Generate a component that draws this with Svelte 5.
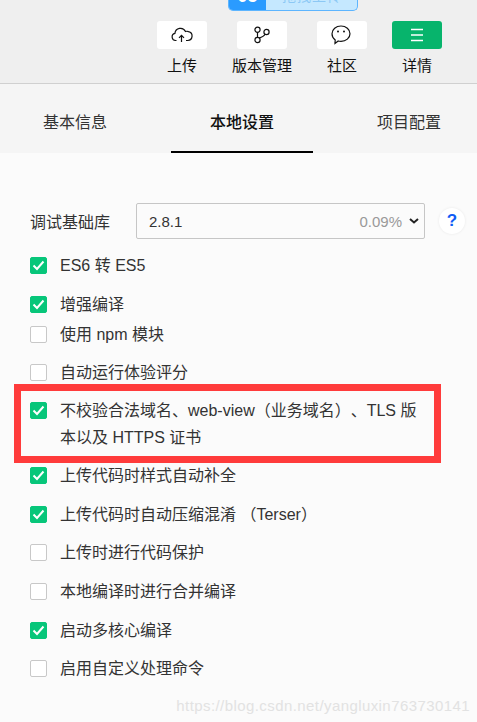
<script lang="ts">
    interface Option {
        label: string;
        checked: boolean;
        tight?: boolean;
        marked?: boolean;
    }

    const tabs: string[] = ["基本信息", "本地设置", "项目配置"];
    const active_tab: number = 1;

    const options: Option[] = [
        { label: "ES6 转 ES5", checked: true },
        { label: "增强编译", checked: true },
        { label: "使用 npm 模块", checked: false, tight: true },
        { label: "自动运行体验评分", checked: false },
        {
            label: "不校验合法域名、web-view（业务域名）、TLS 版本以及 HTTPS 证书",
            checked: true,
            marked: true,
        },
        { label: "上传代码时样式自动补全", checked: true },
        { label: "上传代码时自动压缩混淆 （Terser）", checked: true },
        { label: "上传时进行代码保护", checked: false },
        { label: "本地编译时进行合并编译", checked: false },
        { label: "启动多核心编译", checked: true },
        { label: "启用自定义处理命令", checked: false },
    ];
</script>

<main>
    <header class="toolbar">
        <div class="banner">
            <span class="banner-left">05</span>
            <span class="banner-right">拖拽上传</span>
        </div>
        <div class="tools">
            <div class="tool">
                <div class="tool-btn">
                    <svg width="26" height="18" viewBox="0 0 26 18" fill="none" stroke="#111" stroke-width="1.2">
                        <path d="M7.500 14.500H6.500a3.600 3.600 0 0 1-.6-7.100 5.600 5.600 0 0 1 10.600-1.900 4.200 4.200 0 0 1 3 .1 4.500 4.500 0 0 1-.8 8.900H17" />
                        <path d="M12.500 16V9.500M10 11.800l2.500-2.500 2.500 2.500" />
                    </svg>
                </div>
                <span>上传</span>
            </div>
            <div class="tool">
                <div class="tool-btn">
                    <svg width="20" height="18" viewBox="0 0 20 18" fill="none" stroke="#111" stroke-width="1.2">
                        <circle cx="5.500" cy="3.800" r="2.600" />
                        <circle cx="5.500" cy="14" r="2.600" />
                        <circle cx="14.500" cy="6" r="2.600" />
                        <path d="M5.500 6.400v5M13 8.200c-1 2-3.500 3-6 3.800" />
                    </svg>
                </div>
                <span>版本管理</span>
            </div>
            <div class="tool">
                <div class="tool-btn">
                    <svg class="chat-icon" width="22" height="22" viewBox="0 0 22 22" fill="none" stroke="#111" stroke-width="1.2">
                        <path d="M11 2c5 0 9 3.400 9 7.700s-4 7.700-9 7.700c-1 0-1.900-.1-2.800-.4L5 19.500l.2-3.600C3.200 14.500 2 12.300 2 9.700 2 5.400 6 2 11 2z" />
                        <circle cx="8" cy="7.500" r="1" fill="#111" stroke="none" />
                        <circle cx="14" cy="7.500" r="1" fill="#111" stroke="none" />
                    </svg>
                </div>
                <span>社区</span>
            </div>
            <div class="tool details">
                <div class="tool-btn green">
                    <svg width="14" height="14" viewBox="0 0 14 14" fill="none" stroke="#fff" stroke-width="1.300">
                        <path d="M1 1.500h12M1 7h12M1 12.500h12" />
                    </svg>
                </div>
                <span>详情</span>
            </div>
        </div>
    </header>

    <nav class="tabs">
        {#each tabs as tab, i}
            <div class="tab" class:active={i == active_tab}>{tab}</div>
        {/each}
    </nav>

    <section class="settings">
        <div class="lib-row">
            <span class="lib-label">调试基础库</span>
            <div class="select">
                <span class="version">2.8.1</span>
                <span class="percent">0.09%</span>
                <svg width="10" height="6" viewBox="0 0 10 6" fill="none" stroke="#222" stroke-width="2">
                    <path d="M1 1l4 3.500L9 1" />
                </svg>
            </div>
            <div class="help">?</div>
        </div>

        {#each options as option}
            <div class="option" class:tight={option.tight} class:marked={option.marked}>
                <span class="box" class:checked={option.checked}>
                    {#if option.checked}
                        <svg width="13" height="11" viewBox="0 0 13 11" fill="none" stroke="#fff" stroke-width="2">
                            <path d="M1.500 5.500l3.500 3.500 6.500-7.500" />
                        </svg>
                    {/if}
                </span>
                <span class="text">{option.label}</span>
            </div>
        {/each}
    </section>

    <div class="watermark">https://blog.csdn.net/yangluxin763730141</div>
</main>

<style>
    :global(body) {
        margin: 0;
    }
    * {
        box-sizing: border-box;
    }
    main {
        position: relative;
        width: 477px;
        height: 722px;
        overflow: hidden;
        background-color: #fbfbfb;
        color: #333333;
        font-family: "Liberation Sans", "Noto Sans CJK SC", sans-serif;
        text-spacing-trim: space-all;
    }
    .toolbar {
        height: 84px;
        background-color: #efefef;
        border-bottom: 1px solid #d0d0d0;
        padding-left: 157px;
    }
    .banner {
        display: flex;
        width: 130px;
        height: 11px;
        margin-left: 71px;
        overflow: hidden;
        border: 1px solid #5db5ff;
        border-top: none;
        border-radius: 0 0 5px 5px;
        background-color: #c5e8ff;
    }
    .banner-left {
        width: 37px;
        height: 14px;
        margin-top: -4px;
        background-color: #2a9bff;
        color: #ffffff;
        font-size: 18px;
        font-weight: bold;
        line-height: 0;
        text-align: center;
    }
    .banner-right {
        height: 14px;
        margin-top: -4px;
        padding-left: 16px;
        color: #8cc8f5;
        font-size: 14px;
        line-height: 0;
        letter-spacing: 1px;
    }
    .tools {
        display: flex;
        gap: 30px;
        margin-top: 10px;
    }
    .tool {
        display: flex;
        flex-direction: column;
        align-items: center;
        width: 50px;
        color: #111111;
        font-size: 15px;
        line-height: 20px;
        white-space: nowrap;
    }
    .tool span {
        margin-top: 7px;
    }
    .details {
        margin-left: -5px;
    }
    .tool-btn {
        display: flex;
        align-items: center;
        justify-content: center;
        width: 50px;
        height: 28px;
        flex: none;
        background-color: #ffffff;
        border-radius: 3px;
    }
    .chat-icon {
        margin-right: 3px;
    }
    .green {
        background-color: #07b46c;
    }
    .tabs {
        display: grid;
        grid-template-columns: repeat(3, 142px);
        gap: 25px;
        height: 69px;
        padding-left: 4px;
        background-color: #f5f5f5;
    }
    .tab {
        height: 69px;
        padding-top: 28px;
        font-size: 16px;
        line-height: 22px;
        text-align: center;
        white-space: nowrap;
    }
    .tab.active {
        border-bottom: 2px solid #000000;
        color: #111111;
        font-weight: 500;
    }
    .settings {
        padding: 50px 0 0 30px;
    }
    .lib-row {
        display: flex;
        align-items: center;
        height: 36px;
    }
    .lib-label {
        width: 106px;
        font-size: 16px;
    }
    .select {
        display: flex;
        align-items: center;
        width: 289px;
        height: 36px;
        padding: 0 5px 0 12px;
        border: 1px solid #c6c6c6;
        border-radius: 2px;
        font-size: 15px;
    }
    .version {
        flex: 1;
    }
    .percent {
        margin-right: 7px;
        color: #999999;
    }
    .help {
        width: 26px;
        height: 26px;
        margin-left: 14px;
        border-radius: 50%;
        background-color: #ffffff;
        box-shadow: 0 0 3px rgba(0, 0, 0, 0.08);
        color: #0f5cf5;
        font-size: 17px;
        font-weight: bold;
        line-height: 26px;
        text-align: center;
    }
    .option {
        position: relative;
        display: flex;
        align-items: flex-start;
        width: 392px;
        margin-top: 18.6px;
        font-size: 16px;
        line-height: 20px;
    }
    .lib-row + .option {
        margin-top: 17px;
    }
    .option.tight {
        margin-top: 10px;
    }
    .option.marked {
        line-height: 27px;
        margin-top: 14px;
    }
    .option.marked + .option {
        margin-top: 15px;
    }
    .option.marked .box {
        margin-top: 5px;
    }
    .option.marked::after {
        content: "";
        box-sizing: border-box;
        position: absolute;
        top: -13px;
        left: -16px;
        width: 427px;
        height: 79px;
        border: 7px solid #ff3b3b;
    }
    .box {
        display: flex;
        align-items: center;
        justify-content: center;
        width: 17px;
        height: 17px;
        margin: 1px 13px 0 0;
        flex: none;
        background-color: #ffffff;
        border: 1px solid #c8c8c8;
        border-radius: 2px;
    }
    .box.checked {
        background-color: #07c67a;
        border-color: #07c67a;
    }
    .watermark {
        position: absolute;
        right: 7px;
        bottom: 8px;
        color: #e2e2e2;
        font-size: 15px;
        letter-spacing: 0.42px;
    }
</style>
